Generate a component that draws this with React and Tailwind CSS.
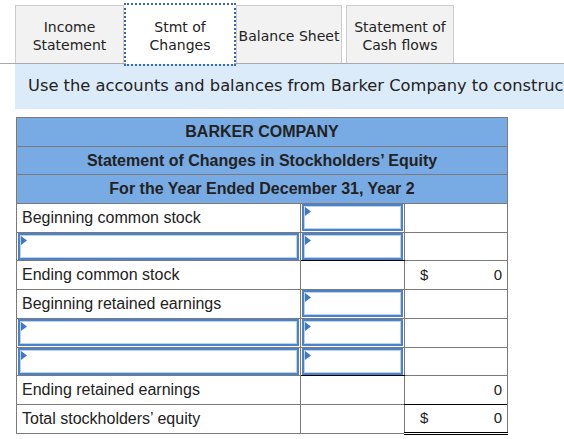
import React from "react";

const Arrow = () => (
  <svg className="absolute left-[1px] top-[1px]" width="6" height="9" viewBox="0 0 6 9">
    <polygon points="0,0 6,4.5 0,9" fill="#3f78c4" />
  </svg>
);

const InputBox = () => (
  <div className="relative h-full w-full border-2 border-[#4d82c6] bg-white shadow-[inset_0_0_0_1px_#bcd3f0]">
    <Arrow />
  </div>
);

const tabs = [
  { label: ["Income", "Statement"], w: "w-[109px]" },
  { label: ["Stmt of", "Changes"], w: "w-[108px]", active: true },
  { label: ["Balance Sheet"], w: "w-[106px]" },
  { label: ["Statement of", "Cash flows"], w: "w-[108px]" },
];

const rows = [
  { label: "Beginning common stock", c2: "input" },
  { label: "input", c2: "input", c2Under: true },
  { label: "Ending common stock", c3: ["$", "0"] },
  { label: "Beginning retained earnings", c2: "input" },
  { label: "input", c2: "input" },
  { label: "input", c2: "input", c2Under: true },
  { label: "Ending retained earnings", c3: ["", "0"] },
  { label: "Total stockholders’ equity", c3: ["$", "0"], total: true },
];

export default function App() {
  return (
    <div className="w-[564px] h-[439px] overflow-hidden bg-white">
      {/* tab strip */}
      <div className="flex items-end gap-[2px] pl-[15px] pt-[5px] border-b border-[#aaaaaa] h-[64px] font-['DejaVu_Sans',sans-serif] text-[14px] text-[#222]">
        {tabs.map((t, i) => (
          <div
            key={i}
            className={
              "flex h-[58px] flex-col items-center justify-center pt-[2px] leading-[18px] text-center " +
              t.w +
              (t.active
                ? " bg-white outline-2 outline-dotted outline-[#3a66a8] -mb-[1px] h-[59px]"
                : " bg-[#f2f2f2] border border-b-0 border-[#cccccc]") +
              (i === 3 ? " ml-[2px]" : "")
            }
          >
            {t.label.map((l) => (
              <span key={l}>{l}</span>
            ))}
          </div>
        ))}
      </div>

      {/* instructions band */}
      <div className="ml-[15px] h-[45px] bg-[#dcebf9] flex items-center pl-[13px] whitespace-nowrap overflow-hidden font-['DejaVu_Sans',sans-serif] text-[16.3px] text-[#222]">
        Use the accounts and balances from Barker Company to construc
      </div>

      {/* statement table */}
      <table className="ml-[16px] mt-[8px] w-[491px] border-collapse table-fixed font-['Liberation_Sans',Arial,sans-serif] text-[16px] text-[#222]">
        <colgroup>
          <col className="w-[284px]" />
          <col className="w-[104px]" />
          <col className="w-[103px]" />
        </colgroup>
        <thead>
          {[
            "BARKER COMPANY",
            "Statement of Changes in Stockholders’ Equity",
            "For the Year Ended December 31, Year 2",
          ].map((h) => (
            <tr key={h}>
              <th colSpan={3} className="h-[28.7px] p-0 border border-[#7a7a7a] bg-[#78aae3] text-center font-bold text-[#222]">
                {h}
              </th>
            </tr>
          ))}
        </thead>
        <tbody>
          {rows.map((r, i) => (
            <tr key={i}>
              <td className="h-[28.7px] p-0 border border-[#7a7a7a]">
                {r.label === "input" ? (
                  <div className="h-[27px] mx-[1px]">
                    <InputBox />
                  </div>
                ) : (
                  <span className="pl-[5px]">{r.label}</span>
                )}
              </td>
              <td
                className={
                  "h-[28.7px] p-0 border border-[#7a7a7a]" +
                  (r.c2Under ? " border-b-black" : "")
                }
              >
                {r.c2 === "input" && (
                  <div className="h-[27px] mx-[1px]">
                    <InputBox />
                  </div>
                )}
              </td>
              <td
                className={
                  "h-[28.7px] p-0 border border-[#7a7a7a]" +
                  (r.total ? " border-t-black border-b-[3px] border-b-black border-double" : "")
                }
              >
                {r.c3 && (
                  <div className="flex justify-between pl-[15px] pr-[5px] text-[15px]">
                    <span>{r.c3[0]}</span>
                    <span>{r.c3[1]}</span>
                  </div>
                )}
              </td>
            </tr>
          ))}
        </tbody>
      </table>
    </div>
  );
}
